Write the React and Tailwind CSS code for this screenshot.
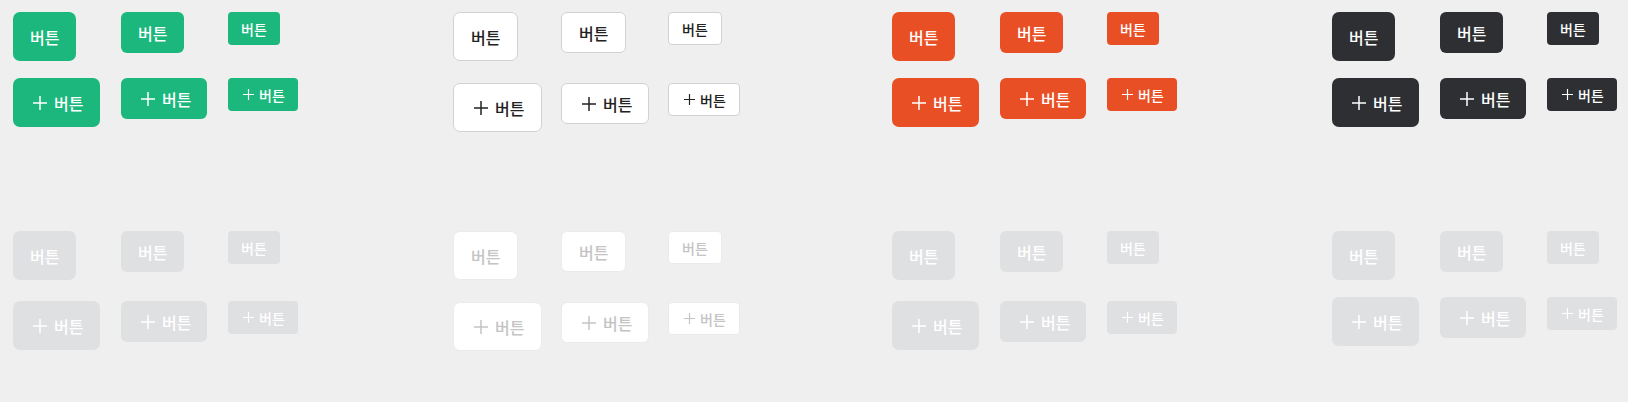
import { clsx } from 'clsx';

const variants = {
  green: 'bg-[#1bb77c] text-white',
  outline: 'bg-white text-[#222222] border border-[#d2d2d2]',
  orange: 'bg-[#e94f25] text-white',
  dark: 'bg-[#2e2f32] text-white',
};

const disabledVariants = {
  green: 'bg-[#dfe0e2] text-white',
  outline: 'bg-white text-[#c4c4c4] border border-[#ebebeb]',
  orange: 'bg-[#dfe0e2] text-white',
  dark: 'bg-[#dfe0e2] text-white',
};

const sizes = {
  lg: { box: 'h-[49px] rounded-[7px] text-[16px]', plain: 'px-[17px]', icon: 'pl-[20px] pr-[17px] gap-[7px]', plus: 14 },
  md: { box: 'h-[41px] rounded-[6px] text-[16px]', plain: 'px-[17px]', icon: 'pl-[20px] pr-[16px] gap-[7px]', plus: 14 },
  sm: { box: 'h-[33px] rounded-[4px] text-[14px]', plain: 'px-[13px]', icon: 'pl-[15px] pr-[13px] gap-[5px]', plus: 11 },
};

function PlusIcon({ size }) {
  return (
    <svg width={size} height={size} viewBox="0 0 14 14" fill="none" stroke="currentColor" strokeWidth="1.5" strokeLinecap="butt">
      <path d="M0 7h14M7 0v14" />
    </svg>
  );
}

function Button({ variant, size, icon, disabled }) {
  const s = sizes[size];
  return (
    <button
      disabled={disabled}
      className={clsx(
        'inline-flex items-center justify-center font-medium leading-none whitespace-nowrap',
        s.box,
        icon ? s.icon : s.plain,
        disabled ? disabledVariants[variant] : variants[variant]
      )}
    >
      {icon && <PlusIcon size={s.plus} />}
      <span>버튼</span>
    </button>
  );
}

function Group({ variant, disabled, rowGap }) {
  return (
    <div className={clsx('flex flex-col', rowGap)}>
      <div className="grid grid-cols-[108px_107px_auto] items-start">
        <div><Button variant={variant} size="lg" disabled={disabled} /></div>
        <div><Button variant={variant} size="md" disabled={disabled} /></div>
        <div><Button variant={variant} size="sm" disabled={disabled} /></div>
      </div>
      <div className="grid grid-cols-[108px_107px_auto] items-start">
        <div><Button variant={variant} size="lg" icon disabled={disabled} /></div>
        <div><Button variant={variant} size="md" icon disabled={disabled} /></div>
        <div><Button variant={variant} size="sm" icon disabled={disabled} /></div>
      </div>
    </div>
  );
}

export default function App() {
  return (
    <div
      className="h-[402px] bg-[#efefef] pl-[13px] pt-[12px]"
      style={{ fontFamily: '"Noto Sans CJK KR", "Noto Sans", sans-serif' }}
    >
      <div className="grid grid-cols-[440px_439px_440px_auto] items-start">
        <Group variant="green" rowGap="gap-[17px]" />
        <Group variant="outline" rowGap="gap-[22px]" />
        <Group variant="orange" rowGap="gap-[17px]" />
        <Group variant="dark" rowGap="gap-[17px]" />
      </div>
      <div className="mt-[99px] grid grid-cols-[440px_439px_440px_auto] items-start">
        <Group variant="green" disabled rowGap="gap-[21px]" />
        <Group variant="outline" disabled rowGap="gap-[22px]" />
        <Group variant="orange" disabled rowGap="gap-[21px]" />
        <Group variant="dark" disabled rowGap="gap-[17px]" />
      </div>
    </div>
  );
}
